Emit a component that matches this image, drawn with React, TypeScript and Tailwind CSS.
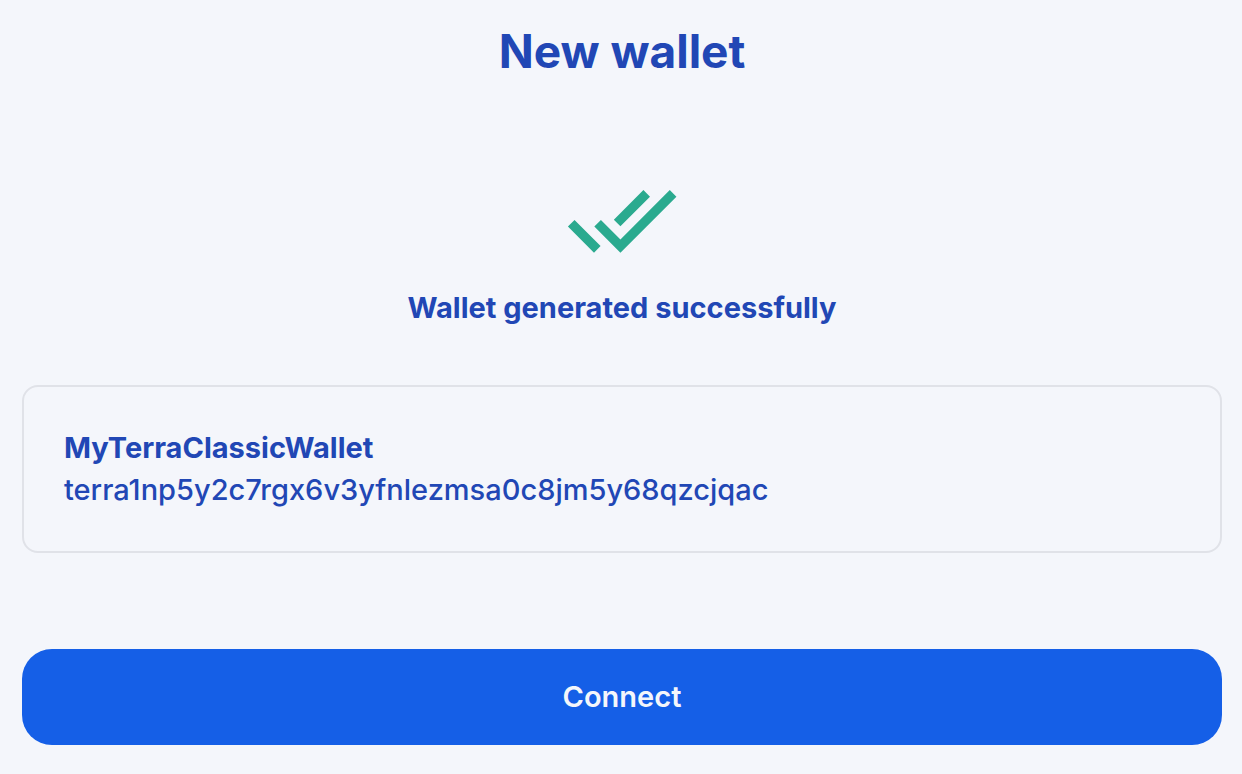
import React from 'react';
import { MdDoneAll } from 'react-icons/md';

const App: React.FC = () => {
  const wallet = {
    name: 'MyTerraClassicWallet',
    address: 'terra1np5y2c7rgx6v3yfnlezmsa0c8jm5y68qzcjqac'
  };

  return (
    <main className="flex min-h-screen flex-col bg-[#f4f6fb] pt-6 pr-5 pb-7 pl-[22px] font-['Inter',sans-serif] text-[#2147b5]">
      <h1 className="text-center text-[46px] leading-[54px] font-bold">New wallet</h1>

      <section className="mt-[86px] flex flex-col items-center">
        <MdDoneAll className="size-28 text-[#2aaa8f]" aria-hidden="true" />
        <p className="mt-[11px] text-[29px] leading-[42px] font-bold">Wallet generated successfully</p>
      </section>

      <section className="mt-14 rounded-2xl border-2 border-[#e0e2e8] p-10">
        <h2 className="text-[29px] leading-[42px] font-bold">{wallet.name}</h2>
        <p className="text-[29px] leading-[42px] font-medium break-all">{wallet.address}</p>
      </section>

      <button
        type="button"
        className="mt-24 h-24 w-full rounded-[30px] bg-[#155fe7] text-[29px] font-semibold text-[#f4f6fb]"
      >
        Connect
      </button>
    </main>
  );
};

export default App;
